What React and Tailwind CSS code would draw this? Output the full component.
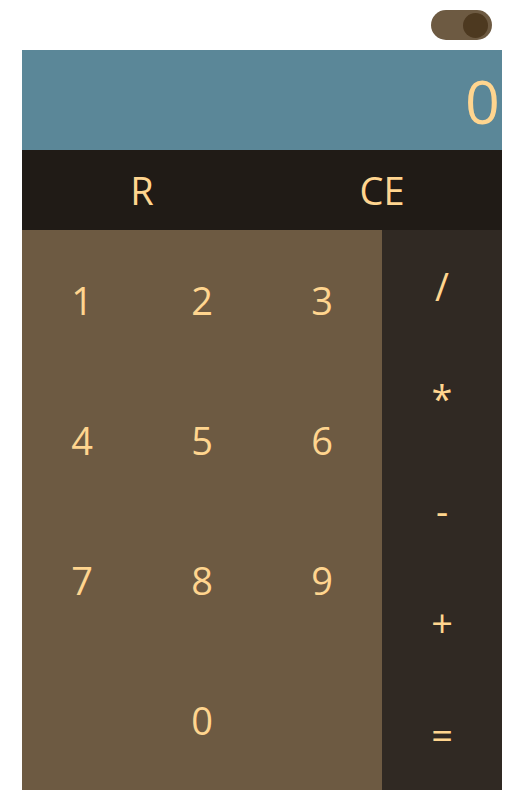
import React, { useState } from 'react';

const digits = ['1', '2', '3', '4', '5', '6', '7', '8', '9', '', '0', ''];
const ops = ['/', '*', '-', '+', '='];

export default function App() {
  const [value, setValue] = useState('0');
  const [dark, setDark] = useState(true);

  const press = (k) => {
    if (!k) return;
    setValue((v) => (v === '0' ? k : v + k));
  };

  return (
    <div className="w-[510px] h-[798px] bg-white" style={{ fontFamily: '"Open Sans", sans-serif' }}>
      {/* Theme toggle */}
      <div className="flex justify-end h-[50px] pt-[10px] pr-[18px]">
        <button
          onClick={() => setDark(!dark)}
          className="w-[61px] h-[30px] rounded-full bg-[#6d5a42] flex items-center justify-end pr-[4px]"
        >
          <span className="w-[25px] h-[25px] rounded-full bg-[#4d3920]" />
        </button>
      </div>

      <div className="ml-[22px] w-[480px] text-[#ffd58f]">
        {/* Display */}
        <div className="h-[100px] bg-[#5b8798] flex items-center justify-end pr-[2px]">
          <span className="text-[61px] leading-none">{value}</span>
        </div>

        {/* Reset / clear row */}
        <div className="h-[80px] bg-[#201b16] grid grid-cols-2">
          <button onClick={() => setValue('0')} className="text-[38px] flex items-center justify-center">R</button>
          <button onClick={() => setValue('0')} className="text-[38px] flex items-center justify-center">CE</button>
        </div>

        {/* Keypad */}
        <div className="flex h-[560px]">
          <div className="w-[360px] bg-[#6d5a42] grid grid-cols-3 grid-rows-4">
            {digits.map((d, i) => (
              <button key={i} onClick={() => press(d)} className="text-[38px] flex items-center justify-center">
                {d}
              </button>
            ))}
          </div>
          <div className="w-[120px] bg-[#302923] grid grid-rows-5">
            {ops.map((o) => (
              <button key={o} onClick={() => press(o)} className="text-[38px] flex items-center justify-center">
                {o}
              </button>
            ))}
          </div>
        </div>
      </div>
    </div>
  );
}
